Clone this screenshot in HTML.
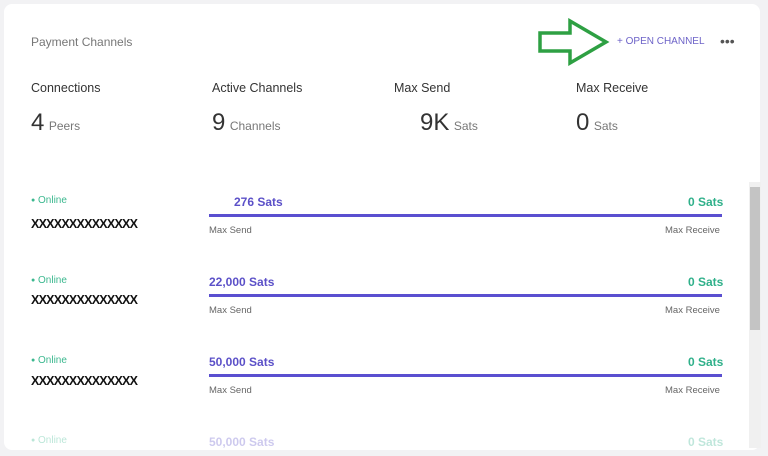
<!DOCTYPE html>
<html><head><style>
body{margin:0;width:768px;height:456px;background:#f2f2f4;font-family:"Liberation Sans",sans-serif;position:relative;overflow:hidden}
.card{position:absolute;left:4px;top:4px;width:756px;height:446px;background:#fff;border-radius:8px}
.a{position:absolute;white-space:nowrap}
.lbl{font-size:12.5px;color:#333}
.big{font-size:24px;color:#333}
.unit{font-size:12px;color:#777}
.on{font-size:10px;color:#3cb88f}
.on b{font-size:7px;font-weight:normal;vertical-align:1px}
.nm{font-size:12.5px;font-weight:bold;color:#111;letter-spacing:-0.75px}
.snd{font-size:12px;font-weight:bold;color:#5b50c8}
.rcv{font-size:12px;font-weight:bold;color:#2fb08a}
.bar{position:absolute;left:209px;width:513px;height:3px;background:#5a4fd0}
.sm{font-size:9.5px;color:#666}
</style></head><body>
<div class="card"></div>
<div class="a" style="left:31px;top:35px;font-size:12px;color:#777">Payment Channels</div>
<svg class="a" style="left:536px;top:18px" width="74" height="48"><path d="M4 15 H34 V3 L70 24 L34 45 V33 H4 Z" fill="none" stroke="#2ea043" stroke-width="3.5" stroke-linejoin="miter"/></svg>
<div class="a" style="left:617px;top:36px;font-size:10px;color:#6d63c8">+ OPEN CHANNEL</div>
<div class="a" style="left:720px;top:33px;font-size:14px;color:#555">•••</div>
<div class="a lbl" style="left:31px;top:81px">Connections</div>
<div class="a lbl" style="left:212px;top:81px">Active Channels</div>
<div class="a lbl" style="left:394px;top:81px">Max Send</div>
<div class="a lbl" style="left:576px;top:81px">Max Receive</div>
<div class="a" style="left:31px;top:109px"><span class="big">4</span> <span class="unit">Peers</span></div>
<div class="a" style="left:212px;top:109px"><span class="big">9</span> <span class="unit">Channels</span></div>
<div class="a" style="left:420px;top:109px"><span class="big">9K</span> <span class="unit">Sats</span></div>
<div class="a" style="left:576px;top:109px"><span class="big">0</span> <span class="unit">Sats</span></div>

<div class="a on" style="left:31px;top:195px"><b>●</b> Online</div>
<div class="a nm" style="left:31px;top:217px">XXXXXXXXXXXXXX</div>
<div class="a snd" style="left:234px;top:195px">276 Sats</div>
<div class="a rcv" style="left:688px;top:195px">0 Sats</div>
<div class="bar" style="top:214px"></div>
<div class="a sm" style="left:209px;top:225px">Max Send</div>
<div class="a sm" style="left:665px;top:225px">Max Receive</div>

<div class="a on" style="left:31px;top:275px"><b>●</b> Online</div>
<div class="a nm" style="left:31px;top:293px">XXXXXXXXXXXXXX</div>
<div class="a snd" style="left:209px;top:275px">22,000 Sats</div>
<div class="a rcv" style="left:688px;top:275px">0 Sats</div>
<div class="bar" style="top:294px"></div>
<div class="a sm" style="left:209px;top:305px">Max Send</div>
<div class="a sm" style="left:665px;top:305px">Max Receive</div>

<div class="a on" style="left:31px;top:355px"><b>●</b> Online</div>
<div class="a nm" style="left:31px;top:374px">XXXXXXXXXXXXXX</div>
<div class="a snd" style="left:209px;top:355px">50,000 Sats</div>
<div class="a rcv" style="left:688px;top:355px">0 Sats</div>
<div class="bar" style="top:374px"></div>
<div class="a sm" style="left:209px;top:385px">Max Send</div>
<div class="a sm" style="left:665px;top:385px">Max Receive</div>

<div class="a on" style="left:31px;top:435px;opacity:.35"><b>●</b> Online</div>
<div class="a snd" style="left:209px;top:435px;opacity:.3">50,000 Sats</div>
<div class="a rcv" style="left:688px;top:435px;opacity:.3">0 Sats</div>

<div class="a" style="left:749px;top:182px;width:12px;height:266px;background:#f0f0f0"></div>
<div class="a" style="left:750px;top:187px;width:10px;height:143px;background:#c4c4c4"></div>
</body></html>
